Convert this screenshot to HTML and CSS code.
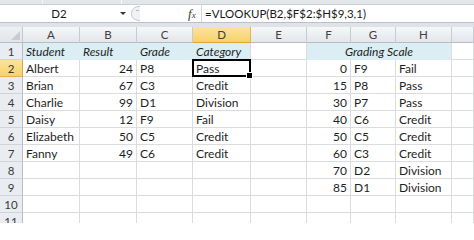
FILE: index.html
```html
<!DOCTYPE html>
<html>
<head>
<meta charset="utf-8">
<link rel="stylesheet" href="styles.css">
</head>
<body>
<div class="top-strip">
  <div class="strip-seg seg1"></div>
  <div class="strip-seg seg2"></div>
  <div class="strip-seg seg3"></div>
</div>
<div class="formula-bar">
  <div class="namebox">D2</div>
  <div class="nb-drop"><span class="tri"></span></div>
  <div class="splitter">
    <svg width="12" height="17" viewBox="0 0 12 17"><path d="M10 1.5 C4 1.5 1.5 4.5 1.5 8.5 C1.5 12.5 4 15.5 10 15.5" fill="#f1f2f4" stroke="#c3c7cd" stroke-width="1"/><path d="M6 5.5 h3" stroke="#b5bac1" stroke-width="1"/></svg>
  </div>
  <div class="fb-space"></div>
  <div class="fx">f<span class="fx-x">x</span></div>
  <div class="formula">=VLOOKUP(B2,$F$2:$H$9,3,1)</div>
</div>
<div class="gap-strip"></div>
<div class="sheet">
  <div class="corner"><span class="corner-tri"></span></div>
  <div class="ch">A</div><div class="ch">B</div><div class="ch">C</div><div class="ch ch-sel">D</div><div class="ch">E</div><div class="ch">F</div><div class="ch">G</div><div class="ch">H</div><div class="ch"></div>

  <div class="rh">1</div>
  <div class="c hd">Student</div><div class="c hd">Result</div><div class="c hd">Grade</div><div class="c hd hd-end">Category</div><div class="c"></div><div class="c hd hd-end merged">Grading Scale</div><div class="c"></div>

  <div class="rh rh-sel">2</div>
  <div class="c">Albert</div><div class="c r">24</div><div class="c">P8</div><div class="c active">Pass<span class="sel"><span class="handle"></span></span></div><div class="c"></div><div class="c r">0</div><div class="c">F9</div><div class="c">Fail</div><div class="c"></div>

  <div class="rh">3</div>
  <div class="c">Brian</div><div class="c r">67</div><div class="c">C3</div><div class="c">Credit</div><div class="c"></div><div class="c r">15</div><div class="c">P8</div><div class="c">Pass</div><div class="c"></div>

  <div class="rh">4</div>
  <div class="c">Charlie</div><div class="c r">99</div><div class="c">D1</div><div class="c">Division</div><div class="c"></div><div class="c r">30</div><div class="c">P7</div><div class="c">Pass</div><div class="c"></div>

  <div class="rh">5</div>
  <div class="c">Daisy</div><div class="c r">12</div><div class="c">F9</div><div class="c">Fail</div><div class="c"></div><div class="c r">40</div><div class="c">C6</div><div class="c">Credit</div><div class="c"></div>

  <div class="rh">6</div>
  <div class="c">Elizabeth</div><div class="c r">50</div><div class="c">C5</div><div class="c">Credit</div><div class="c"></div><div class="c r">50</div><div class="c">C5</div><div class="c">Credit</div><div class="c"></div>

  <div class="rh">7</div>
  <div class="c">Fanny</div><div class="c r">49</div><div class="c">C6</div><div class="c">Credit</div><div class="c"></div><div class="c r">60</div><div class="c">C3</div><div class="c">Credit</div><div class="c"></div>

  <div class="rh">8</div>
  <div class="c"></div><div class="c"></div><div class="c"></div><div class="c"></div><div class="c"></div><div class="c r">70</div><div class="c">D2</div><div class="c">Division</div><div class="c"></div>

  <div class="rh">9</div>
  <div class="c"></div><div class="c"></div><div class="c"></div><div class="c"></div><div class="c"></div><div class="c r">85</div><div class="c">D1</div><div class="c">Division</div><div class="c"></div>

  <div class="rh">10</div>
  <div class="c"></div><div class="c"></div><div class="c"></div><div class="c"></div><div class="c"></div><div class="c"></div><div class="c"></div><div class="c"></div><div class="c"></div>

  <div class="rh">11</div>
  <div class="c"></div><div class="c"></div><div class="c"></div><div class="c"></div><div class="c"></div><div class="c"></div><div class="c"></div><div class="c"></div><div class="c"></div>
</div>
</body>
</html>
```
FILE: styles.css
```css
html, body {
  margin: 0;
  padding: 0;
  background: #ffffff;
}
body {
  width: 474px;
  height: 223px;
  overflow: hidden;
  font-family: Lato, "Open Sans", sans-serif;
  color: #1e1e1e;
}
.top-strip {
  height: 5px;
  display: flex;
  background: #e2e6eb;
  border-bottom: 1px solid #c9ced5;
  box-sizing: border-box;
}
.strip-seg {
  height: 100%;
  border-right: 1px solid #f7f8fa;
  box-sizing: border-box;
}
.seg1 { width: 43px; }
.seg2 { width: 79px; }
.seg3 { flex: 1; border-right: none; }

.formula-bar {
  height: 18px;
  display: flex;
  align-items: stretch;
  background: #ffffff;
  border-bottom: 1px solid #b9c0c9;
  box-sizing: border-box;
  font-size: 11.5px;
  line-height: 17px;
  color: #1a1a1a;
}
.namebox {
  width: 114px;
  text-align: center;
  padding-left: 2px;
}
.nb-drop {
  width: 13px;
  display: flex;
  align-items: center;
  justify-content: center;
}
.tri {
  width: 0;
  height: 0;
  border-left: 3px solid transparent;
  border-right: 3px solid transparent;
  border-top: 3px solid #333;
}
.splitter {
  width: 14px;
  display: flex;
  align-items: center;
  padding-left: 1px;
}
.fb-space {
  width: 44px;
}
.fx {
  width: 14px;
  font-family: "Liberation Serif", serif;
  font-style: italic;
  font-size: 13px;
  color: #3a3a3a;
  border-right: 1px solid #d5d9de;
  box-sizing: border-box;
  margin-right: 3px;
}
.fx-x {
  font-size: 9px;
}
.formula {
  flex: 1;
  white-space: nowrap;
}

.gap-strip {
  height: 4px;
  background: #dfe3e8;
}

.sheet {
  display: grid;
  grid-template-columns: 23px 57px 57px 56px 58px 56px 44px 45px 56px 1fr;
  grid-template-rows: 16px repeat(11, 17px);
  font-size: 12px;
}
.corner {
  position: relative;
  background: linear-gradient(#eef0f3, #e2e5e9);
  border-right: 1px solid #c3c8cf;
  border-bottom: 1px solid #b7bdc5;
  box-sizing: border-box;
}
.corner-tri {
  position: absolute;
  right: 2px;
  bottom: 2px;
  width: 0;
  height: 0;
  border-left: 9px solid transparent;
  border-bottom: 9px solid #c8ccd2;
}
.ch {
  background: linear-gradient(#f6f7f9, #e3e6ea);
  border-right: 1px solid #c8ccd2;
  border-bottom: 1px solid #b7bdc5;
  box-sizing: border-box;
  text-align: center;
  font-size: 11.5px;
  line-height: 15px;
  color: #404040;
}
.ch-sel {
  background: linear-gradient(#fbe3a0, #f7d16a);
  border-right-color: #e0b650;
  border-bottom-color: #d9a93a;
}
.rh {
  background: #e9ecf0;
  border-right: 1px solid #b7bdc5;
  border-bottom: 1px solid #cfd4da;
  box-sizing: border-box;
  text-align: center;
  font-size: 11.5px;
  line-height: 15px;
  padding-top: 1px;
  color: #3a3a3a;
}
.rh-sel {
  background: linear-gradient(#fbe3a0, #f7d16a);
  border-bottom-color: #e0b650;
  border-right-color: #d9a93a;
}
.c {
  border-right: 1px solid #dadcdd;
  border-bottom: 1px solid #dadcdd;
  box-sizing: border-box;
  padding: 1px 3px 0 3px;
  line-height: 15px;
  white-space: nowrap;
  overflow: visible;
}
.r {
  text-align: right;
}
.hd {
  background: #daeef3;
  border-right-color: #daeef3;
  border-bottom-color: #daeef3;
  font-style: italic;
}
.hd-end {
  border-right-color: #dadcdd;
}
.merged {
  grid-column: span 3;
  text-align: center;
}
.active {
  position: relative;
}
.sel {
  position: absolute;
  left: -1px;
  top: -1px;
  width: 59px;
  height: 18px;
  border: 2px solid #000;
  box-sizing: border-box;
}
.handle {
  position: absolute;
  right: -4px;
  bottom: -4px;
  width: 5px;
  height: 5px;
  background: #000;
  border: 1px solid #fff;
}
```
